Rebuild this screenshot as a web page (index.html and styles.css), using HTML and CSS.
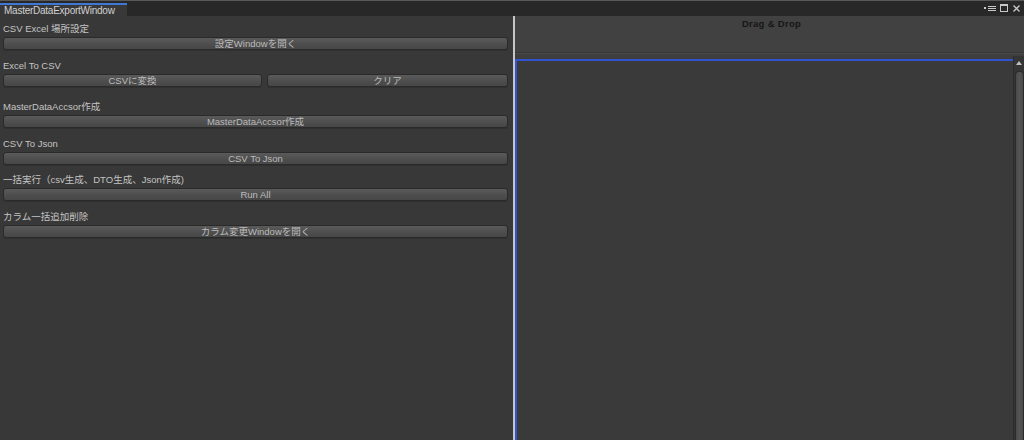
FILE: index.html
```html
<!DOCTYPE html>
<html>
<head>
<meta charset="utf-8">
<link rel="stylesheet" href="styles.css">
</head>
<body>
<div class="window">
  <div class="tabbar">
    <div class="tab">MasterDataExportWindow</div>
    <div class="win-icons">
      <svg class="ic-menu" width="12" height="7" viewBox="0 0 12 7"><rect x="0" y="2" width="2" height="2" fill="#c8c8c8"/><rect x="4" y="1" width="8" height="1" fill="#c8c8c8"/><rect x="4" y="3" width="8" height="1" fill="#c8c8c8"/><rect x="4" y="5" width="8" height="1" fill="#c8c8c8"/></svg>
      <svg class="ic-max" width="8" height="8" viewBox="0 0 8 8"><rect x="0.5" y="0.5" width="7" height="7" fill="none" stroke="#c8c8c8"/><rect x="0" y="0" width="8" height="2" fill="#c8c8c8"/></svg>
      <svg class="ic-close" width="7" height="7" viewBox="0 0 7 7"><path d="M0.5 0.5 L6.5 6.5 M6.5 0.5 L0.5 6.5" stroke="#c8c8c8" stroke-width="1.3"/></svg>
    </div>
  </div>
  <div class="main">
    <div class="left">
      <div class="group">
        <div class="label">CSV Excel 場所設定</div>
        <div class="btn">設定Windowを開く</div>
      </div>
      <div class="group group-extra">
        <div class="label">Excel To CSV</div>
        <div class="btn-row">
          <div class="btn btn-first">CSVに変換</div>
          <div class="btn btn-grow">クリア</div>
        </div>
      </div>
      <div class="group">
        <div class="label">MasterDataAccsor作成</div>
        <div class="btn">MasterDataAccsor作成</div>
      </div>
      <div class="group group-tight">
        <div class="label">CSV To Json</div>
        <div class="btn">CSV To Json</div>
      </div>
      <div class="group">
        <div class="label">一括実行（csv生成、DTO生成、Json作成)</div>
        <div class="btn">Run All</div>
      </div>
      <div class="group">
        <div class="label">カラム一括追加削除</div>
        <div class="btn">カラム変更Windowを開く</div>
      </div>
    </div>
    <div class="splitter"></div>
    <div class="right">
      <div class="dd-header">Drag &amp; Drop</div>
      <div class="dd-gap"></div>
      <div class="dd-body">
        <div class="dd-list"></div>
        <div class="scrollbar">
          <div class="sb-arrow"></div>
          <div class="sb-thumb"></div>
        </div>
      </div>
    </div>
  </div>
</div>
</body>
</html>
```

FILE: styles.css
```css
html, body {
  margin: 0;
  padding: 0;
  background: #383838;
}
.window {
  width: 1024px;
  height: 440px;
  display: flex;
  flex-direction: column;
  font-family: "Liberation Sans", "Noto Sans CJK JP", sans-serif;
  font-size: 9.5px;
  overflow: hidden;
}
.tabbar {
  height: 16px;
  background: #282828;
  border-top: 1px solid #585858;
  box-sizing: border-box;
  display: flex;
  align-items: flex-end;
}
.tab {
  width: 127px;
  height: 13px;
  background: #383838;
  border-top: 2px solid #3d78d4;
  box-sizing: border-box;
  color: #d0d0d0;
  font-size: 10px;
  line-height: 11px;
  padding-left: 4px;
  letter-spacing: -0.25px;
}
.win-icons {
  margin-left: auto;
  align-self: flex-start;
  display: flex;
  align-items: center;
  padding-top: 3px;
  padding-right: 4px;
}
.ic-max { margin-left: 4px; }
.ic-close { margin-left: 5px; }
.main {
  flex: 1;
  display: flex;
}
.left {
  width: 513px;
  background: #383838;
  padding: 4px 5px 0 3px;
  box-sizing: border-box;
  display: flex;
  flex-direction: column;
  gap: 7px;
}
.group-extra { margin-bottom: 4px; }
.group-tight { margin-bottom: -1px; }
.label {
  height: 17px;
  line-height: 17px;
  color: #c4c4c4;
  white-space: nowrap;
}
.btn {
  height: 13px;
  box-sizing: border-box;
  border: 1px solid #2a2a2a;
  border-radius: 3px;
  background: linear-gradient(#5a5a5a, #4d4d4d 60%, #474747);
  color: #bcbcbc;
  text-align: center;
  line-height: 11px;
  white-space: nowrap;
  box-shadow: 0 1px 0 #303030;
}
.btn-row {
  display: flex;
  gap: 5px;
}
.btn-first { width: 259px; }
.btn-grow { flex: 1; }
.splitter {
  width: 2px;
  background: #c6c6c6;
}
.right {
  flex: 1;
  display: flex;
  flex-direction: column;
  background: #3c3c3c;
}
.dd-header {
  height: 37px;
  background: #414141;
  border-bottom: 1px solid #363636;
  box-sizing: border-box;
  text-align: center;
  color: #161616;
  font-size: 9.5px;
  font-weight: bold;
  line-height: 15px;
  padding-left: 4px;
  letter-spacing: 0.3px;
}
.dd-gap {
  height: 6px;
  background: #3e3e3e;
  border-top: 1px solid #4a4a4a;
  box-sizing: border-box;
}
.dd-body {
  flex: 1;
  display: flex;
}
.dd-list {
  flex: 1;
  border-top: 2px solid #3153cf;
  border-left: 2px solid #3153cf;
  background: #3a3a3a;
}
.scrollbar {
  width: 11px;
  background: #353535;
  border-left: 1px solid #2c2c2c;
  box-sizing: border-box;
  display: flex;
  flex-direction: column;
  align-items: center;
  margin-top: -3px;
}
.sb-arrow {
  width: 0;
  height: 0;
  margin-top: 5px;
  border-left: 3px solid transparent;
  border-right: 3px solid transparent;
  border-bottom: 4px solid #c0c0c0;
}
.sb-thumb {
  margin-top: 6px;
  width: 9px;
  flex: 1;
  border-radius: 4px 4px 0 0;
  background: linear-gradient(90deg, #4a4a4a, #555555 50%, #4a4a4a);
  border: 1px solid #2c2c2c;
  border-bottom: none;
  box-sizing: border-box;
}
```
